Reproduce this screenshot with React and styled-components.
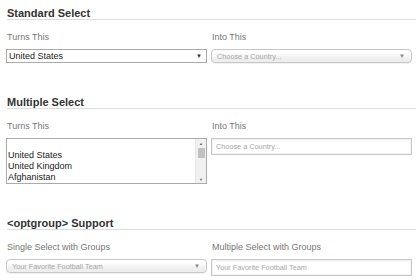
import React from "react";
import styled, { createGlobalStyle } from "styled-components";

const GlobalStyle = createGlobalStyle`
  html, body {
    margin: 0;
    padding: 0;
    background: #fff;
    font-family: "Liberation Sans", Arial, sans-serif;
  }
`;

const Page = styled.div`
  width: 416px;
  height: 280px;
  overflow: hidden;
  padding-top: 7px;
  box-sizing: border-box;
`;

const Section = styled.section`
  margin-bottom: 33px;
`;

const Heading = styled.h2`
  margin: 0 0 0 7px;
  font-size: 11px;
  line-height: 12px;
  font-weight: bold;
  color: #333;
  border-bottom: 1px solid #ddd;
`;

const Columns = styled.div`
  display: grid;
  grid-template-columns: 201px 201px;
  column-gap: 4px;
  padding-left: 6px;
  margin-top: 12px;
`;

const Field = styled.div`
  display: flex;
  flex-direction: column;
`;

const Label = styled.div`
  font-size: 9px;
  line-height: 11px;
  color: #777;
  margin-bottom: 6px;
  padding-left: 1px;
`;

const NativeSelect = styled.div`
  height: 14px;
  box-sizing: border-box;
  border: 1px solid #aaa;
  display: flex;
  align-items: center;
  justify-content: space-between;
  padding: 0 4px 0 2px;
  font-size: 9px;
  color: #222;
  background: #fff;
`;

const Arrow = styled.span`
  font-size: 6px;
  color: ${p => (p.$light ? "#888" : "#333")};
`;

const ChosenSingle = styled.div`
  height: 14px;
  box-sizing: border-box;
  border: 1px solid #c6c6c6;
  border-radius: 4px;
  background: linear-gradient(#fff 20%, #f4f4f4 55%, #e8e8e8);
  box-shadow: 0 0 2px #fff inset, 0 1px 1px rgba(0, 0, 0, 0.06);
  display: flex;
  align-items: center;
  justify-content: space-between;
  padding: 0 6px 0 5px;
  font-size: 7.3px;
  color: #a6a6a6;
`;

const ChosenMulti = styled.div`
  height: 17px;
  box-sizing: border-box;
  border: 1px solid #c8c8c8;
  box-shadow: inset 0 0 0 1px #f2f2f2;
  background: linear-gradient(#f2f2f2 1%, #fff 20%);
  display: flex;
  align-items: center;
  padding: 0 4px;
  font-size: 7.3px;
  color: #a6a6a6;
`;

const ListBox = styled.div`
  height: 46px;
  box-sizing: border-box;
  border: 1px solid #aaa;
  display: flex;
  background: #fff;
`;

const Options = styled.div`
  flex: 1;
`;

const Option = styled.div`
  height: 11px;
  line-height: 11px;
  font-size: 9px;
  color: #222;
  padding-left: 1px;
`;

const Scrollbar = styled.div`
  width: 10px;
  display: flex;
  flex-direction: column;
  align-items: center;
  background: #f1f1f1;
  border-left: 1px solid #e6e6e6;
`;

const ScrollButton = styled.div`
  height: 8px;
  width: 100%;
  display: flex;
  align-items: center;
  justify-content: center;
  font-size: 4px;
  color: #666;
`;

const Thumb = styled.div`
  width: 7px;
  height: 10px;
  margin-top: 1px;
  background: #c1c1c1;
`;

const Spacer = styled.div`
  flex: 1;
`;

export default function App() {
  return (
    <Page>
      <GlobalStyle />
      <Section>
        <Heading>Standard Select</Heading>
        <Columns>
          <Field>
            <Label>Turns This</Label>
            <NativeSelect>
              <span>United States</span>
              <Arrow>▼</Arrow>
            </NativeSelect>
          </Field>
          <Field>
            <Label>Into This</Label>
            <ChosenSingle>
              <span>Choose a Country...</span>
              <Arrow $light>▼</Arrow>
            </ChosenSingle>
          </Field>
        </Columns>
      </Section>
      <Section>
        <Heading>Multiple Select</Heading>
        <Columns>
          <Field>
            <Label>Turns This</Label>
            <ListBox>
              <Options>
                <Option />
                <Option>United States</Option>
                <Option>United Kingdom</Option>
                <Option>Afghanistan</Option>
              </Options>
              <Scrollbar>
                <ScrollButton>▲</ScrollButton>
                <Thumb />
                <Spacer />
                <ScrollButton>▼</ScrollButton>
              </Scrollbar>
            </ListBox>
          </Field>
          <Field>
            <Label>Into This</Label>
            <ChosenMulti>Choose a Country...</ChosenMulti>
          </Field>
        </Columns>
      </Section>
      <Section>
        <Heading>&lt;optgroup&gt; Support</Heading>
        <Columns>
          <Field>
            <Label>Single Select with Groups</Label>
            <ChosenSingle>
              <span>Your Favorite Football Team</span>
              <Arrow $light>▼</Arrow>
            </ChosenSingle>
          </Field>
          <Field>
            <Label>Multiple Select with Groups</Label>
            <ChosenMulti>Your Favorite Football Team</ChosenMulti>
          </Field>
        </Columns>
      </Section>
    </Page>
  );
}
